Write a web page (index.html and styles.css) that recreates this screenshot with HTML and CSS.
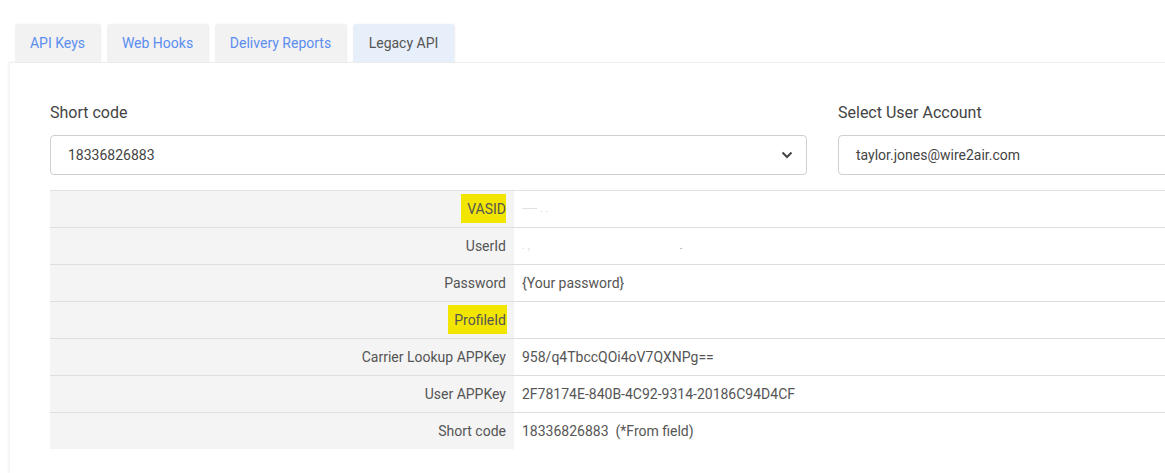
FILE: index.html
```html
<!DOCTYPE html>
<html>
<head>
<meta charset="utf-8">
<link rel="stylesheet" href="styles.css">
</head>
<body>
<div class="page">
  <div class="tabs">
    <div class="tab t1">API Keys</div>
    <div class="tab t2">Web Hooks</div>
    <div class="tab t3">Delivery Reports</div>
    <div class="tab t4 active">Legacy API</div>
  </div>
  <div class="panel">
    <div class="fields">
      <div class="field">
        <label class="label">Short code</label>
        <div class="control select">
          <span>18336826883</span>
          <svg class="chev" width="12" height="8" viewBox="0 0 12 8"><path d="M1.5 1.5 L6 6 L10.5 1.5" fill="none" stroke="#444" stroke-width="2"/></svg>
        </div>
      </div>
      <div class="field">
        <label class="label">Select User Account</label>
        <div class="control"><span>taylor.jones@wire2air.com</span></div>
      </div>
    </div>
    <div class="table">
      <div class="row"><div class="key"><mark>VASID</mark></div><div class="val blur">----- . .</div></div>
      <div class="row"><div class="key">UserId</div><div class="val blur"><span>. ,</span><span class="dot">.</span></div></div>
      <div class="row"><div class="key">Password</div><div class="val">{Your password}</div></div>
      <div class="row"><div class="key"><mark class="wide">ProfileId</mark></div><div class="val"></div></div>
      <div class="row"><div class="key">Carrier Lookup APPKey</div><div class="val">958/q4TbccQOi4oV7QXNPg==</div></div>
      <div class="row"><div class="key">User APPKey</div><div class="val">2F78174E-840B-4C92-9314-20186C94D4CF</div></div>
      <div class="row"><div class="key">Short code</div><div class="val">18336826883&nbsp; (*From field)</div></div>
    </div>
  </div>
</div>
</body>
</html>
```

FILE: styles.css
```css
html, body {
  margin: 0;
  padding: 0;
  background: #fff;
  overflow: hidden;
}
body {
  font-family: Roboto, "Liberation Sans", sans-serif;
  color: #555;
  width: 1165px;
  height: 473px;
}
.page {
  padding-top: 24px;
}
.tabs {
  display: flex;
  gap: 7px;
  padding-left: 15px;
  height: 38px;
}
.tab {
  background: #f2f2f2;
  color: #5b8ef0;
  font-size: 14px;
  line-height: 38px;
  text-align: center;
  white-space: nowrap;
  box-sizing: border-box;
  border-radius: 3px 3px 0 0;
  box-shadow: 1px 0 2px rgba(0,0,0,0.08);
}
.tab.active {
  background: #e7effb;
  color: #555;
}
.t1 { width: 85px; }
.t2 { width: 101px; }
.t3 { width: 131px; }
.t4 { width: 101px; }
.panel {
  margin-left: 10px;
  width: 1155px;
  height: 411px;
  overflow: hidden;
  background: #fff;
  border-top: 1px solid #f0f0f0;
  box-shadow: -2px 0 2px rgba(0,0,0,0.05);
  padding: 40px 0 0 40px;
  box-sizing: border-box;
}
.fields {
  display: grid;
  grid-template-columns: 757px 400px;
  gap: 31px;
}
.label {
  display: block;
  font-size: 16px;
  line-height: 19px;
  color: #444;
  margin-bottom: 13px;
}
.control {
  height: 40px;
  box-sizing: border-box;
  border: 1px solid #cfcfcf;
  border-radius: 4px;
  display: flex;
  align-items: center;
  padding: 0 12px 0 17px;
  font-size: 14px;
  color: #444;
}
.select {
  justify-content: space-between;
}
.chev {
  margin-right: 1px;
}
.table {
  margin-top: 15px;
  width: 1200px;
}
.row {
  display: flex;
  height: 37px;
  border-top: 1px solid #dedede;
  box-sizing: border-box;
  font-size: 14px;
}
.row:first-child {
  border-top: 1px solid #e2e2e2;
}
.key {
  width: 464px;
  background: #f4f4f4;
  text-align: right;
  padding-right: 8px;
  box-sizing: border-box;
  line-height: 36px;
  color: #555;
}
.key mark {
  background: #f2e600;
  color: #555;
  padding: 7px 0 6px 6px;
}
.key mark.wide {
  padding: 7px 1px 6px 6px;
  margin-right: -1px;
}
.val {
  padding-left: 8px;
  line-height: 36px;
  color: #555;
}
.val.blur {
  color: #d8d8d8;
  font-size: 11px;
  filter: blur(0.6px);
  display: flex;
}
.val .dot {
  color: #888;
  margin-left: 150px;
}
```
